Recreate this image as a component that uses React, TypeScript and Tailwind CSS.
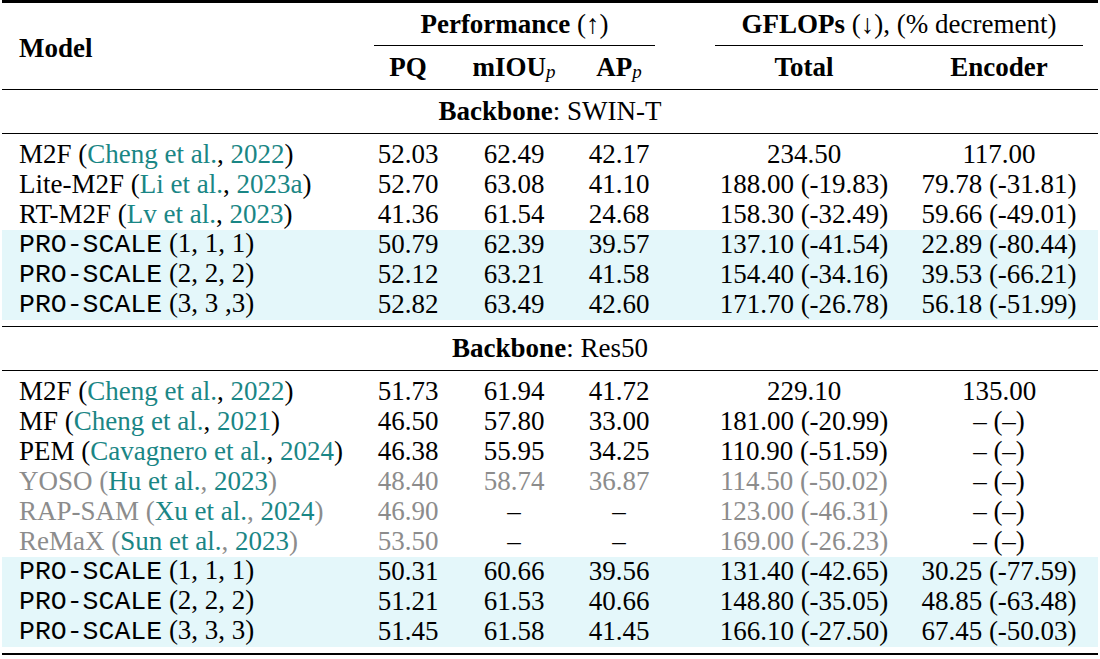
import React from "react";

type Row = {
  name: string;
  cite?: string;
  year?: string;
  cfg?: string;
  pq: string;
  miou: string;
  ap: string;
  total: string;
  enc: string;
  gray?: boolean;
  hl?: boolean;
};

const swin: Row[] = [
  { name: "M2F", cite: "Cheng et al.", year: "2022", pq: "52.03", miou: "62.49", ap: "42.17", total: "234.50", enc: "117.00" },
  { name: "Lite-M2F", cite: "Li et al.", year: "2023a", pq: "52.70", miou: "63.08", ap: "41.10", total: "188.00 (-19.83)", enc: "79.78 (-31.81)" },
  { name: "RT-M2F", cite: "Lv et al.", year: "2023", pq: "41.36", miou: "61.54", ap: "24.68", total: "158.30 (-32.49)", enc: "59.66 (-49.01)" },
  { name: "PRO-SCALE", cfg: "(1, 1, 1)", pq: "50.79", miou: "62.39", ap: "39.57", total: "137.10 (-41.54)", enc: "22.89 (-80.44)", hl: true },
  { name: "PRO-SCALE", cfg: "(2, 2, 2)", pq: "52.12", miou: "63.21", ap: "41.58", total: "154.40 (-34.16)", enc: "39.53 (-66.21)", hl: true },
  { name: "PRO-SCALE", cfg: "(3, 3 ,3)", pq: "52.82", miou: "63.49", ap: "42.60", total: "171.70 (-26.78)", enc: "56.18 (-51.99)", hl: true },
];

const res50: Row[] = [
  { name: "M2F", cite: "Cheng et al.", year: "2022", pq: "51.73", miou: "61.94", ap: "41.72", total: "229.10", enc: "135.00" },
  { name: "MF", cite: "Cheng et al.", year: "2021", pq: "46.50", miou: "57.80", ap: "33.00", total: "181.00 (-20.99)", enc: "– (–)" },
  { name: "PEM", cite: "Cavagnero et al.", year: "2024", pq: "46.38", miou: "55.95", ap: "34.25", total: "110.90 (-51.59)", enc: "– (–)" },
  { name: "YOSO", cite: "Hu et al.", year: "2023", pq: "48.40", miou: "58.74", ap: "36.87", total: "114.50 (-50.02)", enc: "– (–)", gray: true },
  { name: "RAP-SAM", cite: "Xu et al.", year: "2024", pq: "46.90", miou: "–", ap: "–", total: "123.00 (-46.31)", enc: "– (–)", gray: true },
  { name: "ReMaX", cite: "Sun et al.", year: "2023", pq: "53.50", miou: "–", ap: "–", total: "169.00 (-26.23)", enc: "– (–)", gray: true },
  { name: "PRO-SCALE", cfg: "(1, 1, 1)", pq: "50.31", miou: "60.66", ap: "39.56", total: "131.40 (-42.65)", enc: "30.25 (-77.59)", hl: true },
  { name: "PRO-SCALE", cfg: "(2, 2, 2)", pq: "51.21", miou: "61.53", ap: "40.66", total: "148.80 (-35.05)", enc: "48.85 (-63.48)", hl: true },
  { name: "PRO-SCALE", cfg: "(3, 3, 3)", pq: "51.45", miou: "61.58", ap: "41.45", total: "166.10 (-27.50)", enc: "67.45 (-50.03)", hl: true },
];

// model | PQ | mIOU | AP | gap | Total | Encoder | rest
const cols = "grid grid-cols-[360px_92px_120px_90px_36px_208px_182px_1fr]";

function DataRow({ r }: { r: Row }) {
  const tone = r.gray ? "text-[#8c8c8c]" : "text-black";
  return (
    <div className={`${cols} h-[30px] items-center ${r.hl ? "bg-[#e4f7fa]" : ""}`}>
      <div className={`pl-[17px] whitespace-nowrap ${tone}`}>
        {r.cfg ? (
          <>
            <span className="font-['Liberation_Mono',monospace] text-[26.5px]">{r.name}</span> {r.cfg}
          </>
        ) : (
          <>
            {r.name} (<span className="text-[#1a8685]">{r.cite}</span>,{" "}
            <span className="text-[#1a8685]">{r.year}</span>)
          </>
        )}
      </div>
      <div className={`text-center ${tone}`}>{r.pq}</div>
      <div className={`text-center ${r.miou === "–" ? "text-black" : tone}`}>{r.miou}</div>
      <div className={`text-center ${r.ap === "–" ? "text-black" : tone}`}>{r.ap}</div>
      <div />
      <div className={`text-center whitespace-nowrap ${tone}`}>{r.total}</div>
      <div className="text-center whitespace-nowrap text-black">{r.enc}</div>
      <div />
    </div>
  );
}

function Section({ label, rows }: { label: string; rows: Row[] }) {
  return (
    <>
      <div className="flex h-[43px] items-center justify-center">
        <span className="font-bold">Backbone</span>: {label}
      </div>
      <div className="h-px bg-black" />
      <div className="py-[6px]">
        {rows.map((r, i) => (
          <DataRow key={i} r={r} />
        ))}
      </div>
    </>
  );
}

export default function App() {
  return (
    <div className="h-[659px] w-[1100px] overflow-hidden bg-white px-[2px] font-['Liberation_Serif',serif] text-[27px] leading-none text-black">
      <div className="h-[2.5px] bg-black" />
      <div className={`${cols} grid-rows-[42px_1px_43px]`}>
        <div className="row-span-3 flex items-center pl-[17px] pt-[6px] font-bold">Model</div>
        <div className="col-span-3 flex items-center justify-center pl-[12px] pr-[9px] pt-[2px] whitespace-nowrap">
          <span className="font-bold">Performance</span>&nbsp;(↑)
        </div>
        <div className="col-span-4 flex items-center justify-center pl-[51px] pr-[15px] pt-[2px] whitespace-nowrap">
          <span className="font-bold">GFLOPs</span>&nbsp;(↓), (% decrement)
        </div>
        <div className="col-span-3 ml-[12px] mr-[9px] bg-black" />
        <div className="col-span-4 ml-[51px] mr-[15px] bg-black" />
        <div className="flex items-center justify-center font-bold">PQ</div>
        <div className="flex items-center justify-center font-bold whitespace-nowrap">
          mIOU<sub className="relative top-[5px] align-baseline text-[19px] font-normal italic">p</sub>
        </div>
        <div className="flex items-center justify-center font-bold whitespace-nowrap">
          AP<sub className="relative top-[5px] align-baseline text-[19px] font-normal italic">p</sub>
        </div>
        <div />
        <div className="flex items-center justify-center font-bold">Total</div>
        <div className="flex items-center justify-center font-bold">Encoder</div>
        <div />
      </div>
      <div className="h-px bg-black" />
      <Section label="SWIN-T" rows={swin} />
      <div className="h-px bg-black" />
      <Section label="Res50" rows={res50} />
      <div className="h-[2.5px] bg-black" />
    </div>
  );
}
